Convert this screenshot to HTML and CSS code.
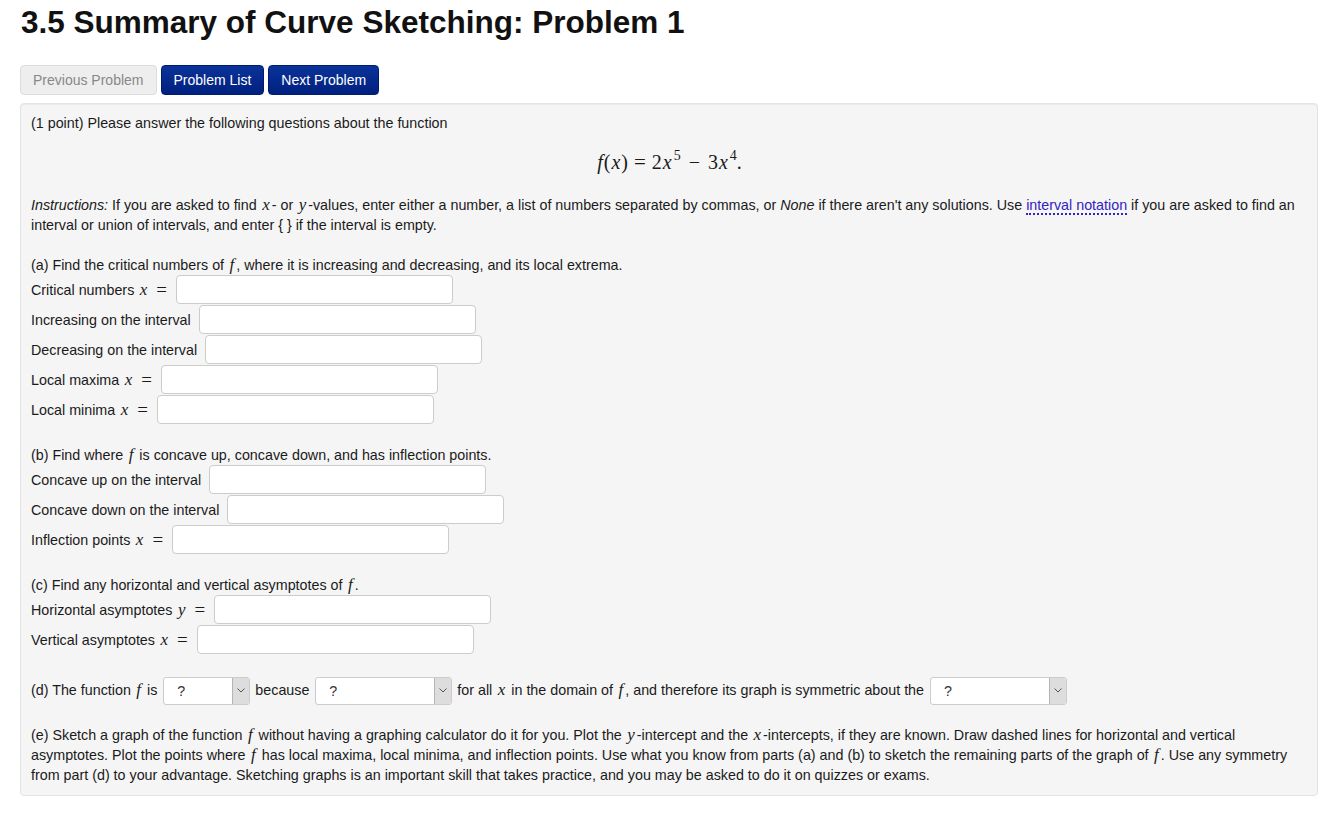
FILE: index.html
```html
<!DOCTYPE html>
<html lang="en">
<head>
    <meta charset="UTF-8">
    <title>3.5 Summary of Curve Sketching: Problem 1</title>
    <link rel="stylesheet" href="styles.css">
</head>
<body>
    <h1 class="title">3.5 Summary of Curve Sketching: Problem 1</h1>

    <div class="nav">
        <span class="btn btn-disabled">Previous Problem</span>
        <a class="btn btn-primary" href="#">Problem List</a>
        <a class="btn btn-primary" href="#">Next Problem</a>
    </div>

    <div class="problem">
        <p class="line">(1 point) Please answer the following questions about the function</p>
        <div class="display-math"><span class="mi">f</span><span class="mo">(</span><span class="mi">x</span><span class="mo">)</span><span class="rel">=</span><span class="mn">2</span><span class="mi">x</span><sup>5</sup><span class="bin">&minus;</span><span class="mn">3</span><span class="mi">x</span><sup>4</sup><span class="mn">.</span></div>
        <p class="para">
            <em>Instructions:</em> If you are asked to find <span class="mi">x</span>- or <span class="mi">y</span>-values, enter either a number, a list of numbers separated by commas, or <em>None</em> if there aren't any solutions. Use <a class="help-link" href="#">interval notation</a> if you are asked to find an interval or union of intervals, and enter { } if the interval is empty.
        </p>

        <div class="part">
            <p class="line">(a) Find the critical numbers of <span class="mi">f</span>, where it is increasing and decreasing, and its local extrema.</p>
            <div class="row">Critical numbers <span class="mi">x</span><span class="rel">=</span><input class="answer" type="text"></div>
            <div class="row">Increasing on the interval <input class="answer" type="text"></div>
            <div class="row">Decreasing on the interval <input class="answer" type="text"></div>
            <div class="row">Local maxima <span class="mi">x</span><span class="rel">=</span><input class="answer" type="text"></div>
            <div class="row">Local minima <span class="mi">x</span><span class="rel">=</span><input class="answer" type="text"></div>
        </div>

        <div class="part">
            <p class="line">(b) Find where <span class="mi">f</span> is concave up, concave down, and has inflection points.</p>
            <div class="row">Concave up on the interval <input class="answer" type="text"></div>
            <div class="row">Concave down on the interval <input class="answer" type="text"></div>
            <div class="row">Inflection points <span class="mi">x</span><span class="rel">=</span><input class="answer" type="text"></div>
        </div>

        <div class="part">
            <p class="line">(c) Find any horizontal and vertical asymptotes of <span class="mi">f</span>.</p>
            <div class="row">Horizontal asymptotes <span class="mi">y</span><span class="rel">=</span><input class="answer" type="text"></div>
            <div class="row">Vertical asymptotes <span class="mi">x</span><span class="rel">=</span><input class="answer" type="text"></div>
        </div>

        <div class="part">
            <div class="select-row">(d) The function <span class="mi">f</span> is <span class="select select-sm"><span class="select-text">?</span><span class="select-arrow"><svg width="8" height="5" viewBox="0 0 8 5"><path d="M0.5 0.5 L4 4 L7.5 0.5" fill="none" stroke="#555" stroke-width="1"/></svg></span></span> because <span class="select select-lg"><span class="select-text">?</span><span class="select-arrow"><svg width="8" height="5" viewBox="0 0 8 5"><path d="M0.5 0.5 L4 4 L7.5 0.5" fill="none" stroke="#555" stroke-width="1"/></svg></span></span> for all <span class="mi">x</span> in the domain of <span class="mi">f</span>, and therefore its graph is symmetric about the <span class="select select-lg"><span class="select-text">?</span><span class="select-arrow"><svg width="8" height="5" viewBox="0 0 8 5"><path d="M0.5 0.5 L4 4 L7.5 0.5" fill="none" stroke="#555" stroke-width="1"/></svg></span></span></div>
        </div>

        <div class="part">
            <p class="para">(e) Sketch a graph of the function <span class="mi">f</span> without having a graphing calculator do it for you. Plot the <span class="mi">y</span>-intercept and the <span class="mi">x</span>-intercepts, if they are known. Draw dashed lines for horizontal and vertical asymptotes. Plot the points where <span class="mi">f</span> has local maxima, local minima, and inflection points. Use what you know from parts (a) and (b) to sketch the remaining parts of the graph of <span class="mi">f</span>. Use any symmetry from part (d) to your advantage. Sketching graphs is an important skill that takes practice, and you may be asked to do it on quizzes or exams.</p>
        </div>
    </div>
</body>
</html>
```

FILE: styles.css
```css
body {
    font-family: 'Liberation Sans', Arial, sans-serif;
    font-size: 14.3px;
    line-height: 20px;
    color: #1a1a1a;
    background: #fff;
    margin: 0;
    padding: 0 26px 0 20px;
}
.title {
    font-size: 31.5px;
    font-weight: bold;
    line-height: 1.1;
    color: #111;
    margin: 5px 0 0 1px;
}
.nav {
    margin-top: 25px;
    display: flex;
    gap: 4px;
    height: 30px;
}
.btn {
    display: inline-block;
    font-size: 14px;
    line-height: 18px;
    padding: 5px 12px;
    border-radius: 4px;
    text-decoration: none;
    border: 1px solid transparent;
}
.btn-disabled {
    background: #eee;
    color: #888;
    border-color: #ddd;
}
.btn-primary {
    color: #fff;
    background: linear-gradient(to bottom, #0a3399, #00207f);
    border-color: #001c70;
}
.problem {
    margin-top: 8px;
    background: #f5f5f5;
    border: 1px solid #e3e3e3;
    border-radius: 4px;
    box-shadow: inset 0 1px 1px rgba(0,0,0,0.05);
    padding: 9px 10px 10px 10px;
}
.line, .para {
    margin: 0;
}
.part {
    margin-top: 20px;
}
.display-math {
    height: 62px;
    line-height: 58px;
    text-align: center;
    font-family: 'Liberation Serif', 'Times New Roman', serif;
    font-size: 20px;
}
.display-math sup {
    font-size: 14px;
    line-height: 0;
    vertical-align: 9px;
    margin-left: 1px;
}
.mi {
    font-family: 'Liberation Serif', 'Times New Roman', serif;
    font-style: italic;
    font-size: 17px;
    padding: 0 2px 0 1.5px;
}
.display-math .mi {
    font-size: 20px;
    padding: 0 1px;
}
.mo, .mn {
    font-family: 'Liberation Serif', 'Times New Roman', serif;
}
.rel {
    font-family: 'Liberation Serif', 'Times New Roman', serif;
    font-size: 19px;
    margin: 0 5px 0 7px;
}
.display-math .rel {
    font-size: 21px;
    margin: 0 6px;
}
.bin {
    margin: 0 8px;
}
.help-link {
    color: #3322c4;
    text-decoration: none;
    border-bottom: 2px dotted #3322c4;
}
.row {
    height: 30px;
    display: flex;
    align-items: center;
    white-space: pre;
}
.answer {
    width: 277px;
    height: 29px;
    box-sizing: border-box;
    margin: 0 0 0 4px;
    border: 1px solid #ccc;
    border-radius: 4px;
    background: #fff;
    font-size: 14px;
    padding: 4px 6px;
}
.select-row {
    height: 30px;
    line-height: 30px;
    white-space: nowrap;
}
.select {
    display: inline-flex;
    vertical-align: middle;
    height: 28px;
    box-sizing: border-box;
    border: 1px solid #ccc;
    border-radius: 3px;
    background: #fff;
    margin: 0 1px 0 2px;
    overflow: hidden;
    line-height: 26px;
}
.select-sm {
    width: 87px;
}
.select-lg {
    width: 137px;
}
.select-text {
    flex: 1;
    padding-left: 13px;
    color: #333;
}
.select-arrow {
    width: 16px;
    background: #ddd;
    border-left: 1px solid #b5b5b5;
    display: flex;
    align-items: center;
    justify-content: center;
}
```
